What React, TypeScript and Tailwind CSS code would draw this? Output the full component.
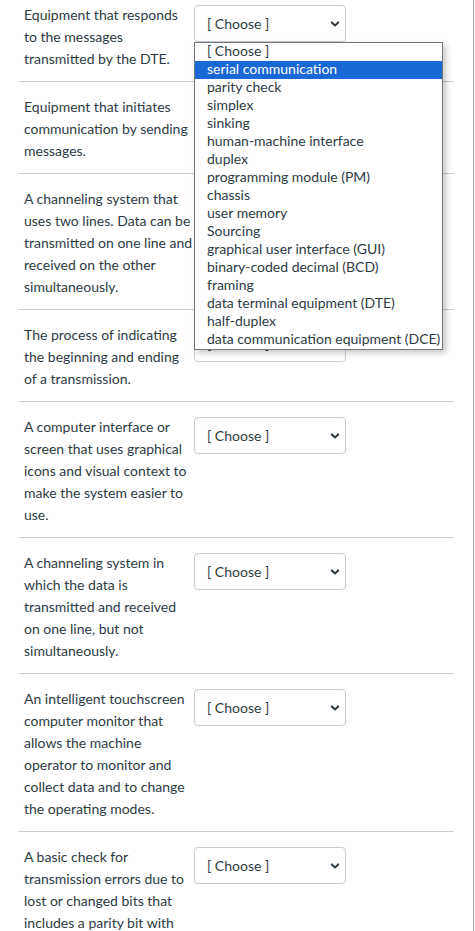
import React from 'react'

interface Row {
  id: string
  text: string
}

const rows: Row[] = [
  { id: 'r1', text: 'Equipment that responds to the messages transmitted by the DTE.' },
  { id: 'r2', text: 'Equipment that initiates communication by sending messages.' },
  { id: 'r3', text: 'A channeling system that uses two lines. Data can be transmitted on one line and received on the other simultaneously.' },
  { id: 'r4', text: 'The process of indicating the beginning and ending of a transmission.' },
  { id: 'r5', text: 'A computer interface or screen that uses graphical icons and visual context to make the system easier to use.' },
  { id: 'r6', text: 'A channeling system in which the data is transmitted and received on one line, but not simultaneously.' },
  { id: 'r7', text: 'An intelligent touchscreen computer monitor that allows the machine operator to monitor and collect data and to change the operating modes.' },
  { id: 'r8', text: 'A basic check for transmission errors due to lost or changed bits that includes a parity bit with' },
]

const options = [
  '[ Choose ]',
  'serial communication',
  'parity check',
  'simplex',
  'sinking',
  'human-machine interface',
  'duplex',
  'programming module (PM)',
  'chassis',
  'user memory',
  'Sourcing',
  'graphical user interface (GUI)',
  'binary-coded decimal (BCD)',
  'framing',
  'data terminal equipment (DTE)',
  'half-duplex',
  'data communication equipment (DCE)',
]

function Chevron() {
  return (
    <svg width="10" height="10" viewBox="0 0 10 10" className="shrink-0">
      <polyline points="1.8,3.4 5,6.4 8.2,3.4" fill="none" stroke="#2d3b45" strokeWidth="2" strokeLinecap="round" strokeLinejoin="round" />
    </svg>
  )
}

function FakeSelect({ open = false }: { open?: boolean }) {
  return (
    <div className="relative mt-[1px]">
      <div className="w-[152px] h-[37px] border border-[#c7cdd1] rounded-[4px] bg-white flex items-center justify-between pl-[12px] pr-[5px] text-[14px] text-[#2d3b45]">
        <span>[ Choose ]</span>
        <Chevron />
      </div>

      {/* Liste ouverte */}
      {open && (
        <div className="absolute left-0 top-[37px] w-[249px] bg-white border border-[#767676] shadow-[3px_3px_6px_rgba(0,0,0,0.22)] z-10">
          {options.map((opt, i) => (
            <div
              key={opt}
              className={`h-[18px] leading-[16px] pl-[12px] text-[14px] whitespace-nowrap ${
                i === 1 ? 'bg-[#1a67d6] text-white' : 'text-[#2d3b45]'
              }`}
            >
              {opt}
            </div>
          ))}
        </div>
      )}
    </div>
  )
}

export default function App() {
  return (
    <div
      className="w-[475px] min-h-[931px] bg-white relative overflow-hidden"
      style={{ fontFamily: 'Lato, "Open Sans", sans-serif' }}
    >
      <div className="absolute right-[1px] top-0 bottom-0 w-px bg-[#a3a3a3]" />
      <div className="pl-[19px] w-[454px]">
        {rows.map((row, i) => (
          <div
            key={row.id}
            className={`flex items-start pl-[5px] pb-[11px] ${
              i === 0 ? 'pt-[4px]' : 'pt-[14px] border-t border-[#c7cdd1]'
            }`}
          >
            <div className="w-[170px] shrink-0 text-[14px] leading-[22px] text-[#2d3b45]">
              {row.text}
            </div>
            <FakeSelect open={i === 0} />
          </div>
        ))}
      </div>
    </div>
  )
}
